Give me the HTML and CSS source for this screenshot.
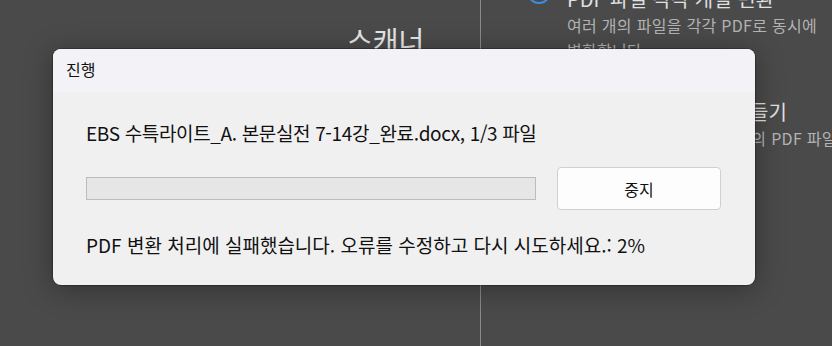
FILE: index.html
```html
<!DOCTYPE html>
<html lang="ko">
<head>
  <meta charset="UTF-8" />
  <title>진행</title>
  <link rel="stylesheet" href="styles.css">
</head>
<body>
  <div class="app">
    <div class="left-pane">
      <h2 class="pane-title">스캐너</h2>
      <div class="pane-foot">이미지 스캔</div>
    </div>
    <div class="right-pane">
      <div class="option">
        <span class="radio checked"></span>
        <div>
          <div class="option-title">PDF 파일 각각 개별 변환</div>
          <div class="option-desc">여러 개의 파일을 각각 PDF로 동시에 변환합니다</div>
        </div>
      </div>
      <div class="option second">
        <span class="radio"></span>
        <div>
          <div class="option-title">여러 파일을 PDF로 만들기</div>
          <div class="option-desc">여러 개의 문서 파일을 하나의 PDF 파일로 합칩니다</div>
        </div>
      </div>
    </div>
  </div>

  <!-- progress dialog -->
  <div class="dialog">
    <div class="dialog-title">진행</div>
    <div class="dialog-body">
      <p class="file-line">EBS 수특라이트_A. 본문실전 7-14강_완료.docx, 1/3 파일</p>
      <div class="progress-row">
        <div class="progress"></div>
        <button class="stop-btn">중지</button>
      </div>
      <p class="status-line">PDF 변환 처리에 실패했습니다. 오류를 수정하고 다시 시도하세요.: 2%</p>
    </div>
  </div>
</body>
</html>
```

FILE: styles.css
```css
body {
  margin: 0;
  width: 832px;
  height: 346px;
  overflow: hidden;
  background: #4a4a4a;
  font-family: 'Noto Sans CJK KR', 'Noto Sans', sans-serif;
  position: relative;
}

.app {
  display: grid;
  grid-template-columns: 481px 1fr;
  height: 100%;
}

.left-pane {
  border-right: 1px solid #8a8a8a;
  display: flex;
  flex-direction: column;
  align-items: flex-start;
  padding: 20px 0 0 347px;
}

.pane-title {
  margin: 0;
  font-size: 28px;
  line-height: 40px;
  font-weight: 400;
  color: #e6e6e6;
}

.pane-foot {
  margin-top: 196px;
  font-size: 16px;
  color: #bbbbbb;
}

.right-pane {
  padding: 0 0 0 46px;
  margin-top: -15px;
  white-space: nowrap;
}

.option {
  display: flex;
  gap: 16px;
}

.option.second {
  margin-top: 35px;
}

.radio {
  flex: none;
  width: 20px;
  height: 20px;
  margin-top: -5px;
  border: 2px solid #9a9a9a;
  border-radius: 50%;
}

.option.second .radio {
  margin-top: 4px;
}

.radio.checked {
  border-color: #3d8ee0;
}

.option-title {
  font-size: 20px;
  color: #e0e0e0;
  line-height: 28px;
}

.option-desc {
  font-size: 16px;
  color: #b3b3b3;
  line-height: 25px;
  letter-spacing: 0.3px;
  width: 300px;
  white-space: normal;
  word-break: keep-all;
}

.dialog {
  position: absolute;
  left: 53px;
  top: 49px;
  width: 702px;
  height: 236px;
  border-radius: 8px;
  overflow: hidden;
  background: #f0f0f0;
  box-shadow: 0 4px 28px rgba(0, 0, 0, 0.35), 0 0 0 1px rgba(0, 0, 0, 0.25);
  display: flex;
  flex-direction: column;
}

.dialog-title {
  height: 43px;
  background: #f2f2f7;
  font-size: 16px;
  color: #111111;
  padding: 8px 0 0 13px;
  box-sizing: border-box;
}

.dialog-body {
  padding: 0 34px 0 33px;
  color: #111111;
  font-size: 19px;
}

.file-line {
  margin: 28px 0 0;
  line-height: 26px;
  letter-spacing: -0.35px;
}

.progress-row {
  display: flex;
  align-items: center;
  gap: 21px;
  margin-top: 21px;
}

.progress {
  width: 448px;
  height: 21px;
  background: #e6e6e6;
  border: 1px solid #bcbcbc;
}

.stop-btn {
  width: 164px;
  height: 43px;
  background: #fdfdfd;
  border: 1px solid #d0d0d0;
  border-radius: 4px;
  font-family: inherit;
  font-size: 16px;
  color: #111111;
}

.status-line {
  margin: 22px 0 0;
  line-height: 26px;
}
```
